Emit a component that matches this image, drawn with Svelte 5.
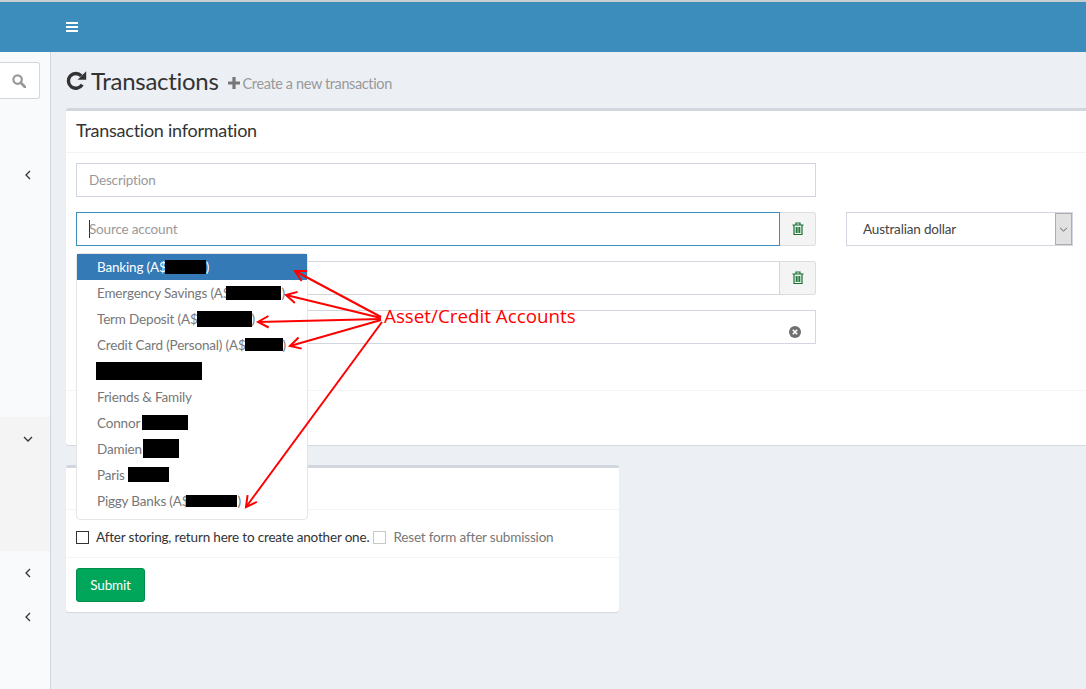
<script>
  // Redacted amounts are kept as black blocks, same as the screenshot.
  const accounts = [
    { label: 'Banking (A$', redact: 41, h: 14, gap: -2, tail: ')', active: true },
    { label: 'Emergency Savings (A$', redact: 55, h: 14, gap: -4, tail: ')' },
    { label: 'Term Deposit (A$', redact: 55, h: 16, gap: -1, tail: ')' },
    { label: 'Credit Card (Personal) (A$', redact: 38, h: 13, gap: -1, tail: ')' },
    { label: '', redact: 106, h: 18, gap: -1, tail: '' },
    { label: 'Friends & Family' },
    { label: 'Connor', redact: 46, h: 15, gap: 2, tail: '' },
    { label: 'Damien', redact: 36, h: 19, gap: 1, tail: '' },
    { label: 'Paris', redact: 41, h: 15, gap: 3, tail: '' },
    { label: 'Piggy Banks (A$', redact: 51, h: 12, gap: -3, tail: ')' }
  ];

  const arrows = [
    { x1: 381, y1: 317, x2: 295, y2: 271 },
    { x1: 381, y1: 318, x2: 286, y2: 295 },
    { x1: 381, y1: 319, x2: 258, y2: 322 },
    { x1: 381, y1: 320, x2: 290, y2: 346 },
    { x1: 382, y1: 322, x2: 246, y2: 507 }
  ];

  // Two short strokes folded back from the tip of each arrow.
  function head(a) {
    const angle = Math.atan2(a.y1 - a.y2, a.x1 - a.x2);
    const point = (d) => `${a.x2 + 12 * Math.cos(angle + d)},${a.y2 + 12 * Math.sin(angle + d)}`;
    return `${point(0.5)} ${a.x2},${a.y2} ${point(-0.5)}`;
  }
</script>

<div class="app">
  <header class="topbar">
    <div class="logo-space"></div>
    <svg class="bars" viewBox="0 0 12 10" width="12" height="10">
      <path d="M0 0h12v2H0zM0 4h12v2H0zM0 8h12v2H0z" fill="#fff" />
    </svg>
  </header>

  <div class="page">
    <aside class="sidebar">
      <div class="search">
        <svg viewBox="0 0 14 14" width="14" height="14">
          <circle cx="5.6" cy="5.6" r="4.2" fill="none" stroke="#999" stroke-width="2.200" />
          <path d="M8.8 8.800 L13 13" stroke="#999" stroke-width="2.800" stroke-linecap="round" />
        </svg>
      </div>
      <div class="nav-item first">
        <svg class="chev" viewBox="0 0 6 10" width="6" height="10"><path d="M5 1 1 5l4 4" /></svg>
      </div>
      <div class="nav-group">
        <div class="nav-item down">
          <svg class="chev" viewBox="0 0 10 6" width="10" height="6"><path d="M1 1l4 4 4-4" /></svg>
        </div>
      </div>
      <div class="nav-item">
        <svg class="chev" viewBox="0 0 6 10" width="6" height="10"><path d="M5 1 1 5l4 4" /></svg>
      </div>
      <div class="nav-item">
        <svg class="chev" viewBox="0 0 6 10" width="6" height="10"><path d="M5 1 1 5l4 4" /></svg>
      </div>
    </aside>

    <main class="content">
      <div class="title">
        <svg class="refresh" viewBox="0 0 22 22" width="22" height="22">
          <path d="M17.2 14.6a7.4 7.4 0 1 1-.9-8.7" fill="none" stroke="#333" stroke-width="3.400" />
          <path d="M21.2 1.2v8.600h-8.600z" fill="#333" />
        </svg>
        <h1>Transactions</h1>
        <svg class="plus" viewBox="0 0 12 12" width="12" height="12">
          <path d="M4.4 0h3.200v4.400H12v3.200H7.600V12H4.400V7.600H0V4.400h4.400z" fill="#777" />
        </svg>
        <small>Create a new transaction</small>
      </div>

      <section class="box wide">
        <h3 class="box-title">Transaction information</h3>
        <div class="box-body">
          <div class="left-col">
            <input class="field" placeholder="Description" />
            <div class="group">
              <div class="field focus"><span class="caret"></span><span class="ph">Source account</span></div>
              <div class="addon">
                <svg viewBox="0 0 12 14" width="12" height="14"><use href="#trash" /></svg>
              </div>
            </div>
            <div class="group">
              <div class="field"></div>
              <div class="addon">
                <svg viewBox="0 0 12 14" width="12" height="14"><use href="#trash" /></svg>
              </div>
            </div>
            <div class="field clearable">
              <svg viewBox="0 0 12 12" width="12" height="12">
                <circle cx="6" cy="6" r="6" fill="#6f6f6f" />
                <path d="M3.8 3.800l4.400 4.400M8.200 3.800 3.800 8.200" stroke="#fff" stroke-width="1.600" />
              </svg>
            </div>
          </div>
          <div class="right-col">
            <div class="select">
              <span>Australian dollar</span>
              <span class="select-btn">
                <svg viewBox="0 0 10 6" width="9" height="5"><path d="M1 1l4 4 4-4" fill="none" stroke="#444" stroke-width="1" /></svg>
              </span>
            </div>
          </div>
        </div>
        <div class="box-footer"></div>
      </section>

      <section class="box narrow">
        <div class="options-head"></div>
        <div class="options">
          <label class="check"><span class="tick dark"></span>After storing, return here to create another one.</label>
          <label class="check muted"><span class="tick"></span>Reset form after submission</label>
        </div>
        <div class="actions">
          <button type="button" class="submit">Submit</button>
        </div>
      </section>
    </main>
  </div>

  <ul class="dropdown">
    {#each accounts as item}
      <li class:active={item.active}>
        <span>{item.label}</span>{#if item.redact}<span class="redact" style:width="{item.redact}px" style:height="{item.h}px" style:margin-left="{item.gap}px"></span>{/if}<span>{item.tail ?? ''}</span>
      </li>
    {/each}
  </ul>

  <svg class="arrows" width="1086" height="689">
    {#each arrows as a}
      <line x1={a.x1} y1={a.y1} x2={a.x2} y2={a.y2} />
      <polyline points={head(a)} />
    {/each}
  </svg>
  <span class="note">Asset/Credit Accounts</span>

  <svg class="defs" width="0" height="0">
    <symbol id="trash" viewBox="0 0 12 14">
      <path d="M4 2.500V1h4v1.500M0.500 3h11M2 3v9.500h8V3M4.300 5v6M6 5v6M7.700 5v6" fill="none" stroke="#14702c" stroke-width="1.200" />
    </symbol>
  </svg>
</div>

<style>
  :global(body) {
    margin: 0;
    background: #ecf0f5;
  }

  .app {
    position: relative;
    height: 689px;
    overflow: hidden;
    font-family: "Lato", "Noto Sans", sans-serif;
    font-size: 13.5px;
    letter-spacing: -0.175px;
    color: #333;
  }

  .topbar {
    display: flex;
    align-items: center;
    height: 50px;
    background: #3c8dbc;
    border-top: 2px solid #c9cdd0;
  }

  .logo-space {
    width: 66px;
  }

  .bars {
    display: block;
  }

  .page {
    display: flex;
    height: 637px;
  }

  .sidebar {
    flex: none;
    box-sizing: border-box;
    width: 51px;
    padding-top: 10px;
    background: #f9fafc;
    border-right: 1px solid #d2d6de;
  }

  .search {
    display: flex;
    align-items: center;
    justify-content: flex-end;
    box-sizing: border-box;
    width: 40px;
    height: 37px;
    padding-right: 13px;
    background: #fff;
    border: 1px solid #d2d6de;
    border-left: none;
    border-radius: 0 3px 3px 0;
  }

  .nav-item {
    display: flex;
    align-items: center;
    justify-content: flex-end;
    height: 44px;
    padding-right: 19px;
  }

  .nav-item.first {
    margin-top: 54px;
  }

  .nav-item.down {
    padding-right: 17px;
  }

  .nav-group {
    box-sizing: border-box;
    height: 134px;
    margin-top: 220px;
    background: #f4f4f4;
  }

  .chev {
    fill: none;
    stroke: #333;
    stroke-width: 1.300;
  }

  .content {
    flex: none;
    box-sizing: border-box;
    width: 1200px;
    padding: 15px;
  }

  .title {
    display: flex;
    align-items: center;
    height: 29px;
    margin: -1px 0 13px;
  }

  .refresh {
    margin: 0 4px 0 -1px;
  }

  h1 {
    margin: 0 9px 0 0;
    font-size: 24px;
    font-weight: 400;
    letter-spacing: -0.28px;
    line-height: 29px;
  }

  .plus {
    margin: 5px 3px 0 0;
  }

  small {
    margin-top: 5px;
    font-size: 14.5px;
    letter-spacing: -0.38px;
    color: #999;
  }

  .box {
    background: #fff;
    border-top: 3px solid #d2d6de;
    border-radius: 3px;
    box-shadow: 0 1px 1px rgba(0, 0, 0, 0.1);
  }

  .wide {
    height: 334px;
    margin-bottom: 20px;
  }

  .narrow {
    width: 553px;
    height: 144px;
  }

  .box-title {
    box-sizing: border-box;
    height: 42px;
    margin: 0;
    padding: 9px 10px;
    font-size: 18px;
    font-weight: 400;
    letter-spacing: -0.25px;
    line-height: 21px;
    border-bottom: 1px solid #f4f4f4;
  }

  .box-body {
    display: flex;
    gap: 30px;
    height: 238px;
    box-sizing: border-box;
    padding: 10px;
    border-bottom: 1px solid #f4f4f4;
  }

  .left-col {
    display: flex;
    flex-direction: column;
    gap: 15px;
    width: 740px;
  }

  .field {
    box-sizing: border-box;
    height: 34px;
    padding: 0 12px;
    font: inherit;
    letter-spacing: inherit;
    line-height: 30px;
    background: #fff;
    border: 1px solid #d2d6de;
    outline: none;
  }

  .group .field {
    flex: 1;
  }

  .field::placeholder,
  .ph {
    color: #999;
  }

  .field.focus {
    display: flex;
    align-items: center;
    border-color: #3c8dbc;
  }

  .caret {
    width: 1px;
    height: 18px;
    margin-right: -1px;
    background: #333;
  }

  .group {
    display: flex;
  }

  .addon {
    display: flex;
    align-items: center;
    justify-content: center;
    box-sizing: border-box;
    width: 36px;
    height: 34px;
    background: #f4f4f4;
    border: 1px solid #ddd;
    border-left: none;
    border-radius: 0 3px 3px 0;
  }

  .clearable {
    display: flex;
    align-items: flex-end;
    justify-content: flex-end;
    padding: 0 14px 5px 0;
  }

  .right-col {
    width: 227px;
    padding-top: 49px;
  }

  .select {
    display: flex;
    align-items: center;
    justify-content: space-between;
    box-sizing: border-box;
    height: 34px;
    padding-left: 16px;
    color: #444;
    border: 1px solid #d2d6de;
  }

  .select-btn {
    display: flex;
    align-items: center;
    justify-content: center;
    box-sizing: border-box;
    width: 17px;
    height: 32px;
    background: #e1e1e1;
    border: 1px solid #adadad;
  }

  .options-head {
    height: 41px;
    border-bottom: 1px solid #f4f4f4;
  }

  .options {
    display: flex;
    align-items: center;
    box-sizing: border-box;
    height: 48px;
    padding: 7px 10px 0;
    border-bottom: 1px solid #f4f4f4;
  }

  .check {
    display: flex;
    align-items: center;
    margin-right: 4px;
  }

  .check.muted {
    color: #777;
  }

  .tick {
    box-sizing: border-box;
    width: 13px;
    height: 13px;
    margin-right: 7px;
    border: 1px solid #c8c8c8;
  }

  .tick.dark {
    border-color: #333;
  }

  .actions {
    padding: 10px;
  }

  .submit {
    box-sizing: border-box;
    width: 69px;
    height: 34px;
    padding: 0;
    font: inherit;
    letter-spacing: inherit;
    color: #fff;
    background: #00a65a;
    border: 1px solid #008d4c;
    border-radius: 3px;
  }

  /* Overlays: the open typeahead menu and the red annotation on top of the page. */
  .dropdown {
    position: absolute;
    left: 76px;
    top: 253px;
    box-sizing: border-box;
    width: 232px;
    height: 267px;
    margin: 0;
    padding: 0;
    list-style: none;
    color: #777;
    background: #fff;
    border: 1px solid #e6e6e6;
    border-radius: 4px;
  }

  .dropdown li {
    display: flex;
    align-items: center;
    box-sizing: border-box;
    height: 26px;
    padding: 0 0 1px 20px;
    white-space: pre;
  }

  .dropdown li.active {
    color: #fff;
    background: #337ab7;
  }

  .redact {
    background: #000;
  }

  .arrows {
    position: absolute;
    left: 0;
    top: 0;
    pointer-events: none;
  }

  .arrows line,
  .arrows polyline {
    fill: none;
    stroke: #f00;
    stroke-width: 2;
  }

  .note {
    position: absolute;
    left: 384px;
    top: 304px;
    font-family: "Open Sans", sans-serif;
    font-size: 18.800px;
    letter-spacing: 0;
    line-height: 24px;
    color: #f00;
  }

  .defs {
    position: absolute;
  }
</style>
